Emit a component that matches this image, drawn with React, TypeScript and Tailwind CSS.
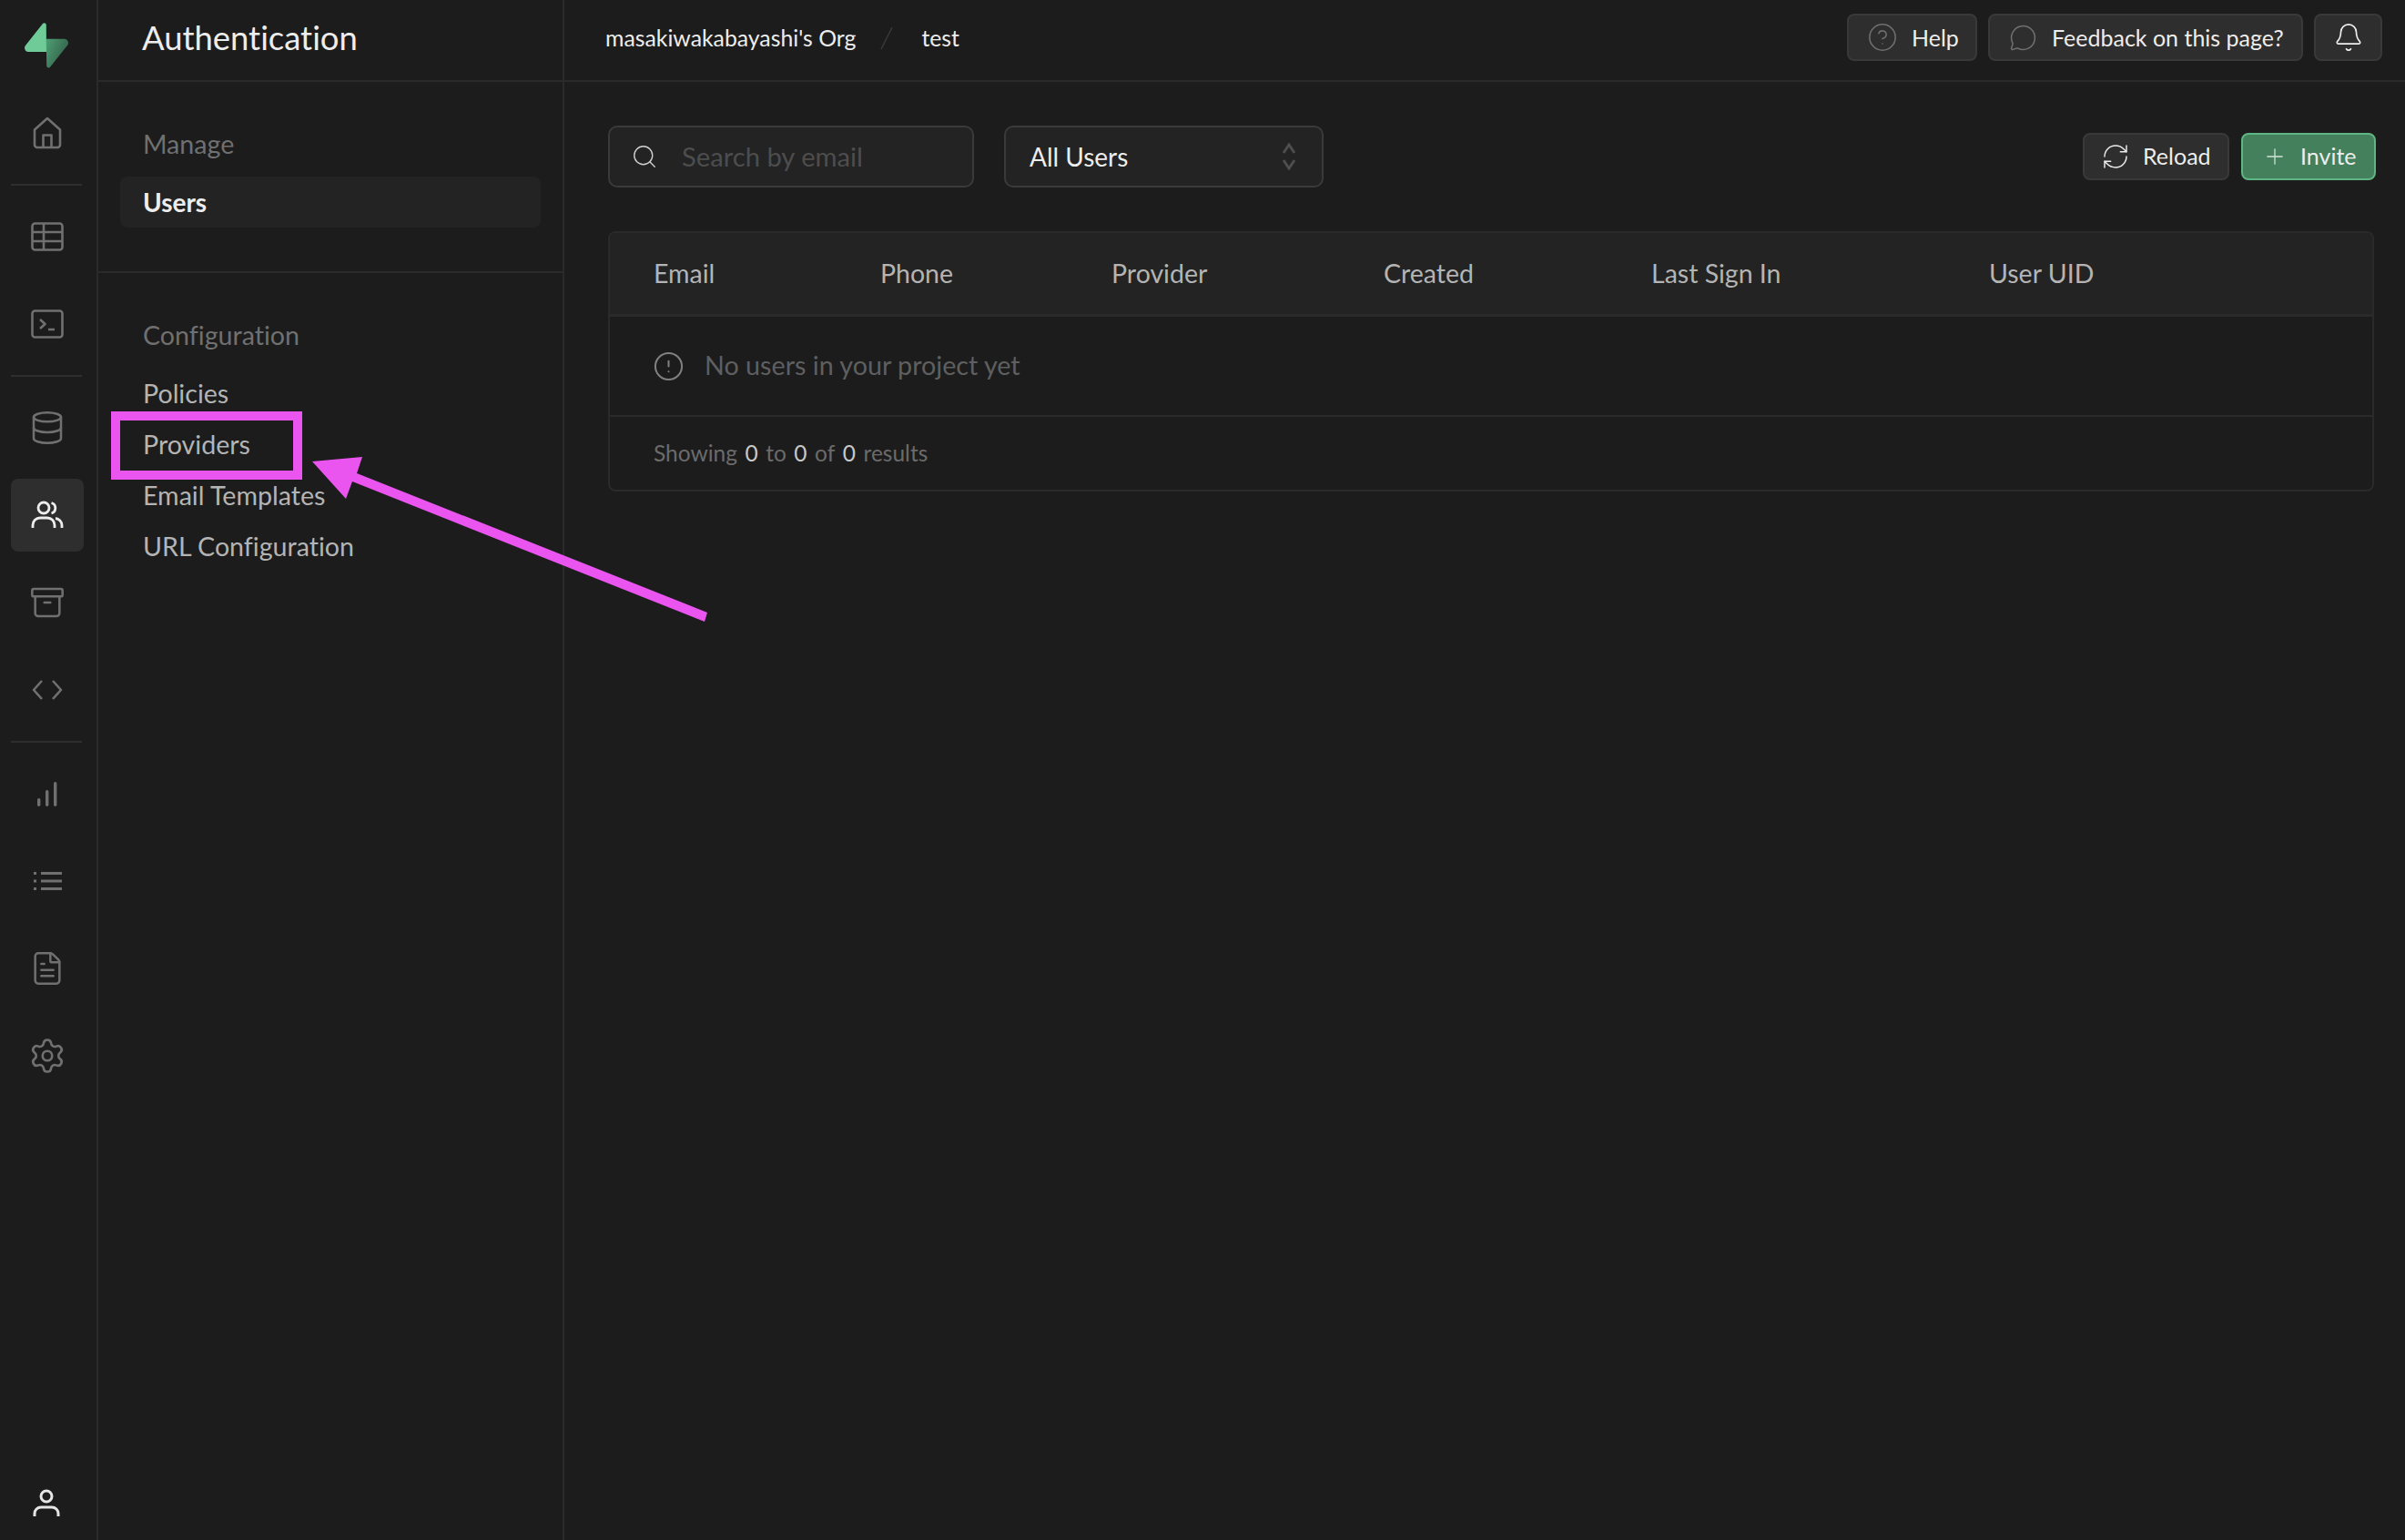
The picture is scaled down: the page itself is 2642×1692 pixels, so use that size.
import { Archive, Bell, CircleAlert, CircleHelp, Database, FileText, MessageCircle, Plus, RefreshCw, Search, Settings } from "lucide-react";
import type { ReactNode } from "react";

function Logo() {
    return (
        <svg width="48" height="50" viewBox="0 0 109 113" fill="none">
            <defs>
                <linearGradient id="bolt" x1="54" y1="55" x2="94" y2="72" gradientUnits="userSpaceOnUse">
                    <stop stopColor="#4b9a70" />
                    <stop offset="1" stopColor="#3a6f54" />
                </linearGradient>
            </defs>
            <path d="M63.7 110.3C60.8 113.9 55 111.9 55 107.3L54 40.1H99.2C107.4 40.1 112 49.5 106.9 55.9L63.7 110.3Z" fill="url(#bolt)" />
            <path d="M45.3 2.1C48.2-1.5 54 .4 54 5L54.5 72.3H9.8C1.6 72.3-2.9 62.8 2.2 56.4L45.3 2.1Z" fill="#6fcb98" />
        </svg>
    );
}

function HomeIcon() {
    return (
        <svg width="34" height="36" viewBox="0 0 34 36" fill="none" stroke="currentColor" strokeWidth="2.6" strokeLinejoin="round">
            <path d="M3 14.5 17 2l14 12.5V31a3 3 0 0 1-3 3H6a3 3 0 0 1-3-3Z" />
            <path d="M12.5 34V20.5h9V34" />
        </svg>
    );
}

function TableIcon() {
    return (
        <svg width="36" height="32" viewBox="0 0 36 32" fill="none" stroke="currentColor" strokeWidth="2.6" strokeLinejoin="round">
            <rect x="1.5" y="1.5" width="33" height="29" rx="3" />
            <path d="M1.5 11h33M1.5 21h33M14 1.5v29" />
        </svg>
    );
}

function TerminalIcon() {
    return (
        <svg width="36" height="32" viewBox="0 0 36 32" fill="none" stroke="currentColor" strokeWidth="2.6" strokeLinejoin="round">
            <rect x="1.5" y="1.5" width="33" height="29" rx="3" />
            <path d="m10 11 5.5 5-5.5 5M19 22h7" />
        </svg>
    );
}

function UsersIcon() {
    return (
        <svg width="36" height="32" viewBox="0 0 36 32" fill="none" stroke="currentColor" strokeWidth="2.8" strokeLinecap="butt">
            <circle cx="14" cy="8" r="6" />
            <path d="M22.5 2.5a6 6 0 0 1 0 11.5" />
            <path d="M2 30v-3a8 8 0 0 1 8-8h8a8 8 0 0 1 8 8v3" />
            <path d="M27 19.5a8 8 0 0 1 7 7.5v3" />
        </svg>
    );
}

function CodeIcon() {
    return (
        <svg width="34" height="24" viewBox="0 0 34 24" fill="none" stroke="currentColor" strokeWidth="2.6" strokeLinejoin="round">
            <path d="M11 2 2 12l9 10M23 2l9 10-9 10" />
        </svg>
    );
}

function BarsIcon() {
    return (
        <svg width="22" height="27" viewBox="0 0 22 27" fill="currentColor">
            <rect x="0" y="18" width="3.4" height="9" rx="1.7" />
            <rect x="9" y="9" width="3.4" height="18" rx="1.7" />
            <rect x="18" y="0" width="3.4" height="27" rx="1.7" />
        </svg>
    );
}

function ListIcon() {
    return (
        <svg width="31" height="22" viewBox="0 0 31 22" fill="none" stroke="currentColor" strokeWidth="3">
            <path d="M8 2.5h23M8 11h23M8 19.5h23M0 2.5h3M0 11h3M0 19.5h3" />
        </svg>
    );
}

function PersonIcon() {
    return (
        <svg width="30" height="32" viewBox="0 0 30 32" fill="none" stroke="currentColor" strokeWidth="3" strokeLinecap="butt">
            <circle cx="15" cy="8" r="6" />
            <path d="M2 30v-3a7 7 0 0 1 7-7h12a7 7 0 0 1 7 7v3" />
        </svg>
    );
}

function RailItem({ active, children }: { active?: boolean; children: ReactNode }) {
    return (
        <div className={active ? "w-20 h-20 rounded-lg flex items-center justify-center bg-[#2e2e2e] text-[#ededed]" : "w-20 h-20 rounded-lg flex items-center justify-center text-[#707070]"}>
            {children}
        </div>
    );
}

function RailDivider() {
    return <div className="w-[78px] h-0.5 bg-[#2e2e2e]" />;
}

function Rail() {
    return (
        <aside className="w-[108px] shrink-0 border-r-2 border-[#2a2a2a] flex flex-col pl-3">
            <div className="h-[106px] pt-[25px] pl-[15px]">
                <Logo />
            </div>
            <div className="flex flex-col gap-4">
                <RailItem><HomeIcon /></RailItem>
                <RailDivider />
                <RailItem><TableIcon /></RailItem>
                <RailItem><TerminalIcon /></RailItem>
                <RailDivider />
                <RailItem><Database size={40} strokeWidth={1.5} /></RailItem>
                <RailItem active><UsersIcon /></RailItem>
                <RailItem><Archive size={40} strokeWidth={1.5} /></RailItem>
                <RailItem><CodeIcon /></RailItem>
                <RailDivider />
                <RailItem><BarsIcon /></RailItem>
                <RailItem><ListIcon /></RailItem>
                <RailItem><FileText size={40} strokeWidth={1.5} /></RailItem>
                <RailItem><Settings size={42} strokeWidth={1.5} /></RailItem>
            </div>
            <div className="mt-auto h-[56px] pl-[24px] text-[#e5e5e5]">
                <PersonIcon />
            </div>
        </aside>
    );
}

function NavItem({ label }: { label: string }) {
    return <div className="h-14 pl-[25px] pb-[1px] flex items-center text-[28.6px] text-[#b4b4b4]">{label}</div>;
}

function NavPanel() {
    return (
        <nav className="w-[512px] shrink-0 border-r-2 border-[#2a2a2a] flex flex-col">
            <div className="h-[90px] border-b-2 border-[#2a2a2a] pl-[48px] pb-[6px] flex items-center text-[36.4px] text-[#ededed]">Authentication</div>
            <div className="px-6 pt-[50px] pb-12 border-b-2 border-[#2a2a2a]">
                <div className="pl-[25px] h-9 mb-[18px] flex items-center text-[28.6px] text-[#707070]">Manage</div>
                <div className="h-14 pl-[25px] rounded-lg bg-[#232323] flex items-center text-[28px] font-bold text-[#ededed]">Users</div>
            </div>
            <div className="px-6 pt-[50px]">
                <div className="pl-[25px] h-9 mb-[19px] flex items-center text-[28.6px] text-[#707070]">Configuration</div>
                <NavItem label="Policies" />
                <NavItem label="Providers" />
                <NavItem label="Email Templates" />
                <NavItem label="URL Configuration" />
            </div>
        </nav>
    );
}

function TopButton({ className, children }: { className: string; children: ReactNode }) {
    return (
        <div className={`h-[52px] rounded-lg border-2 border-[#393939] bg-[#2e2e2e] flex items-center text-[25px] text-[#ededed] ${className}`}>
            {children}
        </div>
    );
}

function TopBar() {
    return (
        <header className="h-[90px] border-b-2 border-[#2a2a2a] pl-[45px] pr-[25px] pb-[6px] flex items-center justify-between">
            <div className="flex items-center pt-[2px] text-[24.8px] text-[#ededed]">
                <span>masakiwakabayashi's Org</span>
                <svg className="ml-[27px] mr-[31px]" width="14" height="24" viewBox="0 0 14 24" fill="none" stroke="#3a3a3a" strokeWidth="1.5">
                    <path d="M13 0 1 24" />
                </svg>
                <span>test</span>
            </div>
            <div className="flex items-center gap-3">
                <TopButton className="w-[143px] pl-[20px] gap-[15px]">
                    <CircleHelp size={34} strokeWidth={1.1} className="text-[#707070]" />
                    <span className="pt-[2px]">Help</span>
                </TopButton>
                <TopButton className="w-[346px] pl-[21px] gap-[16px]">
                    <MessageCircle size={31} strokeWidth={1.2} className="text-[#707070]" />
                    <span className="pt-[2px]">Feedback on this page?</span>
                </TopButton>
                <TopButton className="w-[75px] justify-center">
                    <Bell size={34} strokeWidth={1.2} className="text-[#ededed]" />
                </TopButton>
            </div>
        </header>
    );
}

function Toolbar() {
    return (
        <div className="h-[68px] flex items-center justify-between">
            <div className="flex items-center gap-[33px]">
                <div className="w-[402px] h-[68px] rounded-[10px] border-2 border-[#3a3a3a] bg-[#232323] pl-[23px] flex items-center gap-[26px] text-[29.2px] text-[#4d4d4d]">
                    <Search size={30} strokeWidth={1.1} className="text-[#d0d0d0]" />
                    Search by email
                </div>
                <div className="w-[351px] h-[68px] rounded-[10px] border-2 border-[#3a3a3a] bg-[#232323] pl-[26px] pr-[28px] flex items-center justify-between text-[28px] text-[#ededed]">
                    All Users
                    <svg width="16" height="30" viewBox="0 0 16 30" fill="none" stroke="#4d4d4d" strokeWidth="3">
                        <path d="M2 11 8 2l6 9M2 19l6 9 6-9" />
                    </svg>
                </div>
            </div>
            <div className="flex items-center gap-[13px] -mr-[2px]">
                <div className="w-[161px] h-[52px] rounded-lg border-2 border-[#393939] bg-[#2e2e2e] pl-[18px] flex items-center gap-[14px] text-[25px] text-[#ededed]">
                    <RefreshCw size={32} strokeWidth={1.1} />
                    Reload
                </div>
                <div className="w-[148px] h-[52px] rounded-lg border-2 border-[#5fb583] bg-[#44805c] pl-[21px] flex items-center gap-[14px] text-[25px] text-[#ededed]">
                    <Plus size={28} strokeWidth={1.1} className="text-[#cfe3d6]" />
                    Invite
                </div>
            </div>
        </div>
    );
}

function UsersTable() {
    return (
        <div className="mt-12 rounded-lg border-2 border-[#2a2a2a] overflow-hidden">
            <div className="h-[92px] pl-[48px] pb-[1px] bg-[#232323] border-b-[3px] border-[#2a2a2a] grid grid-cols-[249px_254px_299px_294px_371px_1fr] items-center text-[28.5px] text-[#b4b4b4]">
                <span>Email</span>
                <span>Phone</span>
                <span>Provider</span>
                <span>Created</span>
                <span>Last Sign In</span>
                <span>User UID</span>
            </div>
            <div className="h-[110px] pl-[47px] border-b-2 border-[#2a2a2a] flex items-center gap-[22px] text-[28.7px] text-[#5f5f5f]">
                <CircleAlert size={35} strokeWidth={1.4} className="text-[#808080]" />
                No users in your project yet
            </div>
            <div className="h-[80px] pl-[48px] flex items-center gap-[8.5px] text-[24.5px] text-[#6b6b6b]">
                <span>Showing</span>
                <span className="text-[#c8c8c8]">0</span>
                <span>to</span>
                <span className="text-[#c8c8c8]">0</span>
                <span>of</span>
                <span className="text-[#c8c8c8]">0</span>
                <span>results</span>
            </div>
        </div>
    );
}

function Annotation() {
    return (
        <>
            <div className="absolute left-[122px] top-[452px] w-[210px] h-[75px] border-[10px] border-[#ea55f0]" />
            <svg className="absolute left-0 top-0 pointer-events-none" width="800" height="700" viewBox="0 0 800 700">
                <polygon fill="#ea55f0" points="343,507 398,502 392,520 777,673 774,683 387,529 380,548" />
            </svg>
        </>
    );
}

export default function App() {
    return (
        <div className="relative w-screen h-screen overflow-hidden flex bg-[#1c1c1c] font-[Lato,sans-serif] [font-variant-ligatures:none]">
            <Rail />
            <NavPanel />
            <main className="flex-1 flex flex-col">
                <TopBar />
                <div className="pt-12 pl-12 pr-[34px]">
                    <Toolbar />
                    <UsersTable />
                </div>
            </main>
            <Annotation />
        </div>
    );
}
